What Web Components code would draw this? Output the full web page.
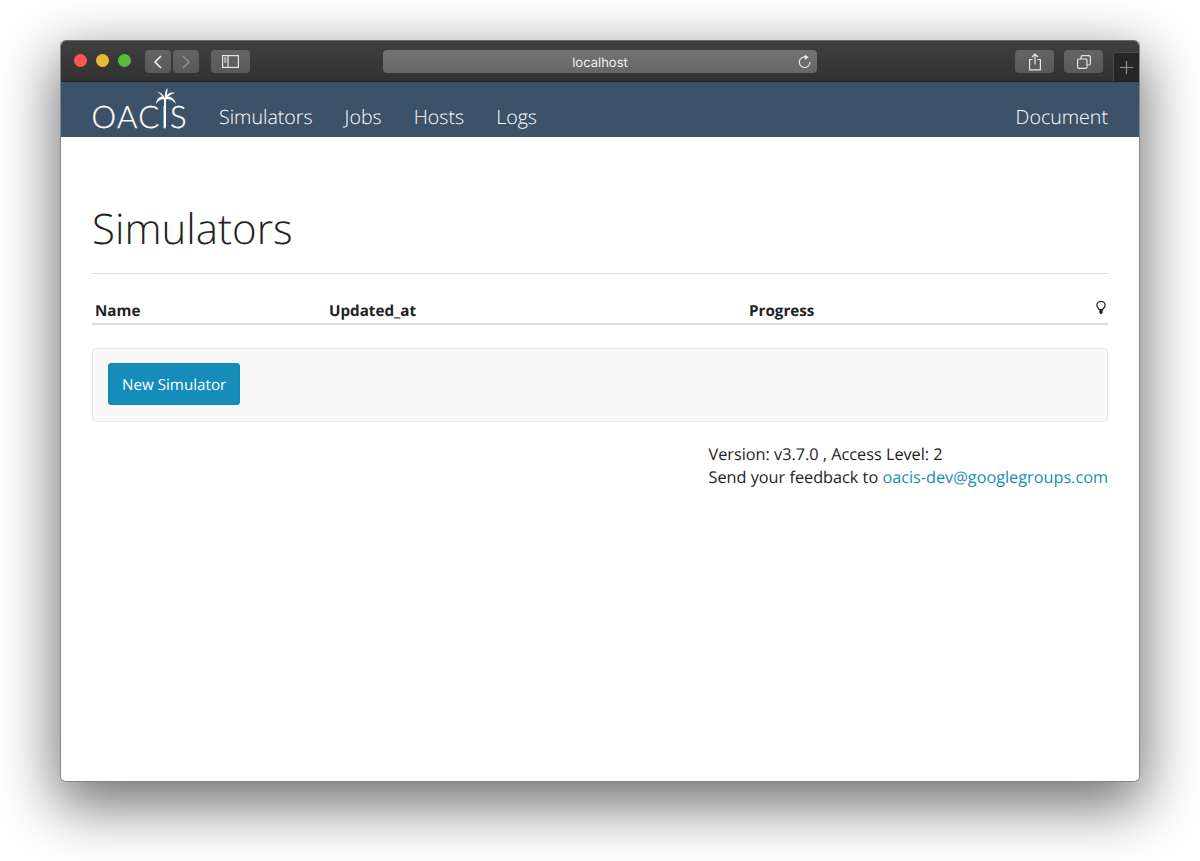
<!DOCTYPE html>
<html lang="en"><head><meta charset="utf-8"><title>OACIS</title>
<style>
html,body{margin:0;padding:0;background:#fff}
body{padding:40px 60px 0;height:861px;box-sizing:border-box;overflow:hidden;font-family:"Open Sans",sans-serif;text-rendering:geometricPrecision}
</style></head><body>
<browser-window>
  <safari-toolbar slot="toolbar"></safari-toolbar>
  <oacis-navbar slot="nav"></oacis-navbar>
  <page-content>
    <page-title>Simulators</page-title>
    <simulator-table></simulator-table>
    <action-well><primary-button>New Simulator</primary-button></action-well>
    <page-footer></page-footer>
  </page-content>
</browser-window>
<script>
function def(name, css, html){
  customElements.define(name, class extends HTMLElement{
    constructor(){super();const r=this.attachShadow({mode:'open'});r.innerHTML='<style>'+css+'</style>'+html;}
  });
}
def('browser-window',`
:host{display:flex;flex-direction:column;width:1080px;height:742px;box-sizing:border-box;border-radius:6px;background:#fff;
 border:1px solid #858585;border-top-color:#6b6b6b;box-shadow:0 20px 58px 4px rgba(0,0,0,.56);overflow:hidden}
`,`<slot name="toolbar"></slot><slot name="nav"></slot><slot></slot>`);

const ib=`stroke="#e6e6e6" fill="none" stroke-width="1.2"`;
def('safari-toolbar',`
:host{display:flex;align-items:flex-start;height:41px;box-sizing:border-box;padding:9px 0 0 13px;flex:none;
 background:linear-gradient(#3f3f3f,#323232);border-bottom:1px solid #1f1f1f;position:relative}
.dots{display:flex;gap:9px;margin-top:4px;width:71px}
.dot{width:13px;height:13px;border-radius:50%}
.btn{height:23px;border-radius:4px;background:linear-gradient(#646464,#595959);display:flex;align-items:center;justify-content:center;flex:none}
.btn svg{display:block}
.nav{display:flex;gap:2px}
.w26{width:26px}.w39{width:39px}
.side{margin-left:12px}
.url{width:434px;margin-left:133px;position:relative;color:#f0f0f0;font:400 13px/23px Inter,"Liberation Sans",sans-serif;background:linear-gradient(#737373,#666)}
.url span{padding-top:4px}
.url svg{position:absolute;right:5px;top:4px}
.share{margin-left:198px}
.tabs{margin-left:10px}
.plus{position:absolute;right:0;top:11px;width:26px;height:29px;box-sizing:border-box;background:#262626;border-left:1px solid #4a4a4a;border-top:1px solid #4a4a4a;display:flex;align-items:center;justify-content:center}
`,`
<div class="dots"><div class="dot" style="background:#fc5753"></div><div class="dot" style="background:#e6bb36"></div><div class="dot" style="background:#57c038"></div></div>
<div class="nav">
 <div class="btn w26"><svg width="12" height="16" viewBox="0 0 12 16"><path d="M9 2 3 8l6 6" fill="none" stroke="#f0f0f0" stroke-width="1.6"/></svg></div>
 <div class="btn w26"><svg width="12" height="16" viewBox="0 0 12 16"><path d="M3 2l6 6-6 6" fill="none" stroke="#8c8c8c" stroke-width="1.6"/></svg></div>
</div>
<div class="btn w39 side"><svg width="17" height="13" viewBox="0 0 17 13"><rect x=".6" y=".6" width="15.8" height="11.8" ${ib}/><path d="M6 .6v11.8" ${ib}/><path d="M2 3h2.5M2 5h2.5M2 7h2.5" stroke="#e6e6e6" stroke-width="1"/></svg></div>
<div class="btn url"><span>localhost</span><svg width="15" height="16" viewBox="0 0 15 16"><path d="M9.6 3.3A5.3 5.3 0 1 0 12.9 8" ${ib} stroke-width="1.3"/><path d="M7.8.6l4 2.7-4 2.6z" fill="#e6e6e6"/></svg></div>
<div class="btn w39 share"><svg width="14" height="18" viewBox="0 0 14 18"><path d="M4.5 6.5H1.6v10.4h10.8V6.5H9.5" ${ib}/><path d="M7 11.5V1.5M4 4l3-3 3 3" ${ib}/></svg></div>
<div class="btn w39 tabs"><svg width="14" height="14" viewBox="0 0 14 14"><rect x=".6" y="4" width="9.4" height="9.4" rx="1.5" ${ib}/><path d="M4 4V2.1Q4 .6 5.5 .6h6.4q1.5 0 1.5 1.5v6.4q0 1.5-1.5 1.5H10" ${ib}/></svg></div>
<div class="plus"><svg width="13" height="13" viewBox="0 0 13 13"><path d="M6.5 0v13M0 6.5h13" stroke="#8e8e8e" stroke-width="1.2"/></svg></div>
`);

def('oacis-navbar',`
:host{display:flex;align-items:center;height:55px;flex:none;box-sizing:border-box;padding:0 31px;background:#3c5269;color:#fff;font-family:"Open Sans",sans-serif;font-weight:300;font-size:19.6px}
.logo{position:relative;width:95px;height:55px;margin-right:32px;flex:none}
.word{position:absolute;left:-.5px;top:12px;font:300 31px/44px Lato,"Open Sans",sans-serif;letter-spacing:1.4px;color:#fff;-webkit-text-stroke:.25px #fff;white-space:nowrap}
.logo svg{position:absolute;left:60px;top:4px}
.links{display:flex;gap:32px;margin-top:14px;line-height:27px}
.doc{margin-left:auto;margin-top:14px;line-height:27px}
`,`
<div class="logo"><span class="word">OACIS</span>
<svg width="26" height="42" viewBox="0 0 26 42"><path d="M13 12V41" stroke="#fff" stroke-width="2" fill="none"/><path d="M13 12C12.500 8 13.500 4 15.500 2 15.500 5 15 9 14 12ZM13 12C11 8 8 5.500 5 6 8 7 10 10 12 13ZM13 12C9 9.500 5 11 4 18 6.500 14 9.500 12.500 13 13.500ZM13 12C15 7.500 19 5.500 23 7 19.500 7.500 16.500 9.500 14 13ZM13 12C17 9.500 22 11 24 18 21 14 17.500 12.500 13 13.500Z" fill="#fff"/></svg></div>
<div class="links"><span>Simulators</span><span>Jobs</span><span>Hosts</span><span>Logs</span></div>
<span class="doc">Document</span>
`);

def('page-content',`:host{display:flex;flex-direction:column;padding:0 31px;flex:1;background:#fff;color:#222;font:400 16px/23px "Open Sans",sans-serif}`,`<slot></slot>`);

def('page-title',`
:host{display:block;margin-top:61px;padding-bottom:14px;border-bottom:1px solid #ddd;color:#222;font:300 42px/61px "Open Sans",sans-serif}
`,`<slot></slot>`);

def('simulator-table',`
:host{display:grid;grid-template-columns:234px 420px 1fr 20px;margin-top:25px;border-bottom:2px solid #ddd;font-weight:700;font-size:15.200px;line-height:25px;color:#222;height:24px;box-sizing:content-box}
span{padding-left:3px}
svg{display:block;margin-top:2px;margin-left:8px}
`,`<span>Name</span><span>Updated_at</span><span>Progress</span>
<svg width="10" height="14" viewBox="0 0 11 15"><path d="M3.600 9.200C2.800 7.600 1 6.800 1 4.700A4.400 4.400 0 0 1 10 4.700C10 6.800 8.200 7.600 7.400 9.200Z" fill="#fff" stroke="#222" stroke-width="1.400"/><path d="M3.700 9.500h3.600v3L6.300 14h-1.600L3.700 12.500z" fill="#222"/></svg>`);

def('action-well',`
:host{display:block;margin-top:23px;padding:14px 15px 16px;min-height:42px;background:#f9f9f9;border:1px solid #e8e8e8;border-radius:4px}
`,`<slot></slot>`);

def('primary-button',`
:host{display:inline-block;height:42px;box-sizing:border-box;padding:0 13px;border-radius:3px;background:#158cba;border:1px solid #1386b3;color:#fff;font:400 15.200px/42px "Open Sans",sans-serif;vertical-align:top}
`,`<slot></slot>`);

def('page-footer',`
:host{display:block;margin-top:21px;align-self:flex-end;color:#222;font:400 16.250px/23px "Open Sans",sans-serif}
a{color:#158cba;text-decoration:none}
`,`Version: v3.7.0 , Access Level: 2<br>Send your feedback to <a href="#">oacis-dev@googlegroups.com</a>`);
</script>
</body></html>
